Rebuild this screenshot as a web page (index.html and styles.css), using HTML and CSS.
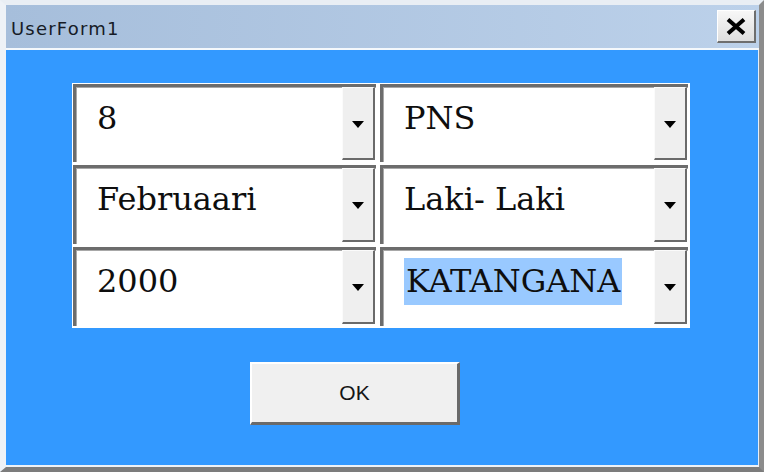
FILE: index.html
```html
<!DOCTYPE html>
<html>
<head>
<meta charset="utf-8">
<title>UserForm1</title>
<link rel="stylesheet" href="styles.css">
</head>
<body>
<div class="window">
  <div class="titlebar">
    <span class="title">UserForm1</span>
    <button class="close" aria-label="Close">
      <svg width="20" height="17" viewBox="0 0 20 17"><path d="M2 1.5 L18 15.5 M18 1.5 L2 15.5" stroke="#000" stroke-width="4" stroke-linecap="butt"/></svg>
    </button>
  </div>
  <div class="client">
    <div class="grid">
      <div class="combo"><div class="val">8</div><div class="drop"><span class="arrow"></span></div></div>
      <div class="combo"><div class="val">PNS</div><div class="drop"><span class="arrow"></span></div></div>
      <div class="combo"><div class="val">Februaari</div><div class="drop"><span class="arrow"></span></div></div>
      <div class="combo"><div class="val">Laki- Laki</div><div class="drop"><span class="arrow"></span></div></div>
      <div class="combo"><div class="val">2000</div><div class="drop"><span class="arrow"></span></div></div>
      <div class="combo"><div class="val"><span class="sel">KATANGANA</span></div><div class="drop"><span class="arrow"></span></div></div>
    </div>
    <button class="ok">OK</button>
  </div>
</div>
</body>
</html>
```
FILE: styles.css
```css
html, body {
  margin: 0;
  padding: 0;
  background: #ffffff;
}
.window {
  width: 764px;
  height: 472px;
  box-sizing: border-box;
  border-left: 6px solid #eef2f7;
  border-top: 5px solid #e9eef4;
  border-right: 5px solid #8c8c8c;
  border-bottom: 5px solid #7c7c7c;
  display: flex;
  flex-direction: column;
}
.titlebar {
  height: 43px;
  flex: none;
  background: linear-gradient(to right, #a6bedb, #bcd1ea);
  border-bottom: 2px solid #f4f8fc;
  display: flex;
  align-items: flex-start;
  justify-content: space-between;
}
.title {
  font-family: "DejaVu Sans", sans-serif;
  font-size: 18px;
  letter-spacing: 1.2px;
  color: #161b26;
  margin: 13px 0 0 5px;
}
.close {
  width: 39px;
  height: 33px;
  margin: 5px 3px 0 0;
  padding: 0;
  box-sizing: border-box;
  background: linear-gradient(#f7f7f7, #dedede);
  border-top: 1px solid #ffffff;
  border-left: 1px solid #ffffff;
  border-right: 2px solid #6e6e6e;
  border-bottom: 2px solid #6e6e6e;
  display: flex;
  align-items: center;
  justify-content: center;
}
.client {
  flex: 1;
  background: #3399ff;
  border-bottom: 2px solid #eef2f6;
  border-right: 1px solid #e6eef8;
  padding: 33px 0 0 66px;
  display: flex;
  flex-direction: column;
  align-items: flex-start;
}
.grid {
  display: grid;
  grid-template-columns: 303px 308px;
  grid-template-rows: 78px 79px 79px;
  column-gap: 4px;
  row-gap: 3px;
  padding: 1px 2px 2px 1px;
  background: #ffffff;
}
.combo {
  display: flex;
  box-sizing: border-box;
  background: #ffffff;
  border-top: 3px solid #6c6c6c;
  border-left: 3px solid #6c6c6c;
  box-shadow: inset 1px 1px 0 #a8a8a8;
}
.val {
  flex: 1;
  display: flex;
  align-items: center;
  padding: 0 0 14px 21px;
  font-family: "DejaVu Serif", serif;
  font-size: 32px;
  color: #0e0e0e;
  white-space: nowrap;
}
.sel {
  background: #99c9ff;
  padding: 4px 2px 5px 2px;
}
.drop {
  width: 33px;
  flex: none;
  box-sizing: border-box;
  margin: 0 1px 2px 0;
  background: #efefef;
  border-left: 1px solid #fbfbfb;
  border-top: 1px solid #fbfbfb;
  border-right: 2px solid #6a6a6a;
  border-bottom: 2px solid #6a6a6a;
  display: flex;
  align-items: center;
  justify-content: center;
}
.arrow {
  width: 0;
  height: 0;
  border-left: 6px solid transparent;
  border-right: 6px solid transparent;
  border-top: 7px solid #000000;
  margin-top: 2px;
}
.ok {
  margin: 34px 0 0 178px;
  width: 210px;
  height: 63px;
  box-sizing: border-box;
  background: #f0f0f0;
  border-top: 2px solid #ffffff;
  border-left: 2px solid #ffffff;
  border-right: 3px solid #6a6a6a;
  border-bottom: 3px solid #6a6a6a;
  font-family: "Liberation Sans", sans-serif;
  font-size: 21px;
  color: #151515;
  padding: 0;
}
```
